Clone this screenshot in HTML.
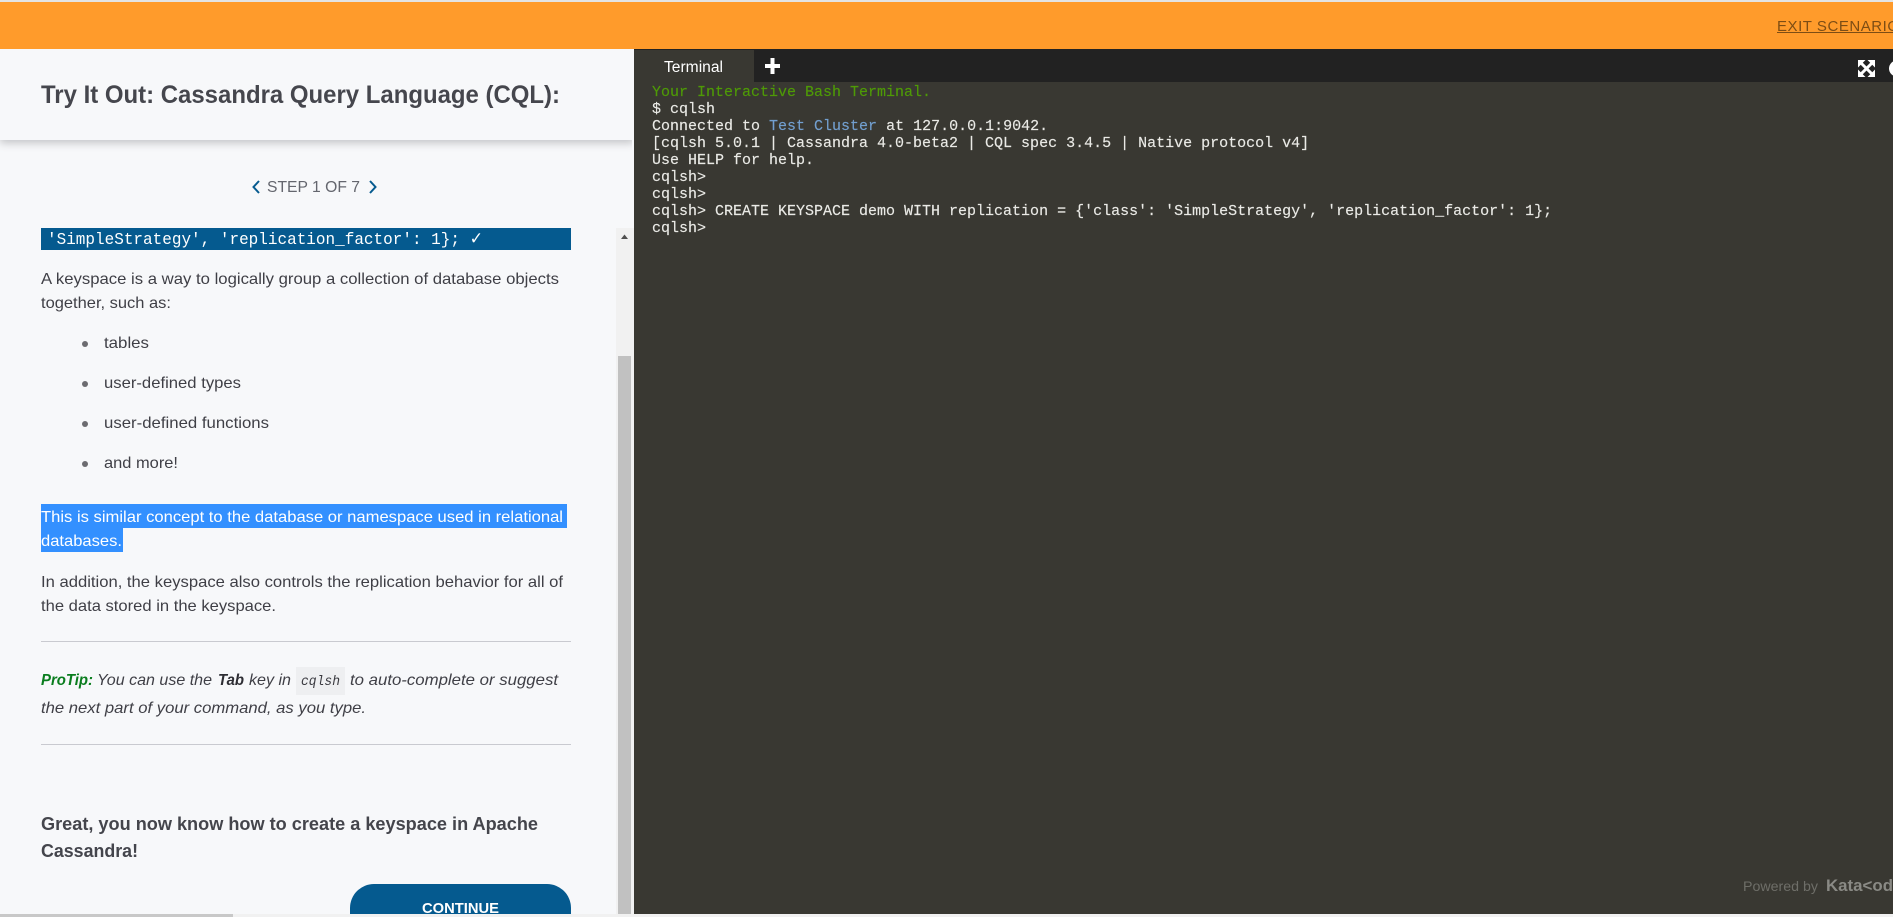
<!DOCTYPE html>
<html lang="en">
<head>
<meta charset="utf-8">
<title>Try It Out: Cassandra Query Language (CQL)</title>
<style>
html,body{margin:0;padding:0;width:1893px;height:917px;overflow:hidden;background:#f7f8fa;font-family:"Liberation Sans",sans-serif}
#w{position:relative;width:1893px;height:917px;overflow:hidden;background:#f7f8fa}
.b{position:absolute}
svg{position:absolute;left:0;top:0}
text{font-family:"Liberation Sans",sans-serif;white-space:pre}
.p{font-size:16px;fill:#3f3f46}
.t{font-family:"Liberation Mono",monospace;font-size:15px;fill:#eaeae6;stroke:#eaeae6;stroke-width:.15px}
</style>
</head>
<body>
<div id="w">
<div class="b" style="left:0;top:0;width:1893px;height:2px;background:#e4e4e4"></div>
<div class="b" style="left:0;top:2px;width:1893px;height:47px;background:#ff9b2b"></div>

<div class="b" style="left:0;top:49px;width:634px;height:91px;background:#f7f8fa;box-shadow:0 3px 8px rgba(60,60,70,.28);clip-path:inset(0 2px -20px 0)"></div>

<div class="b" style="left:41px;top:228px;width:530px;height:22px;background:#055a8f"></div>
<div class="b" style="left:41px;top:504px;width:526px;height:24px;background:#3390ff"></div>
<div class="b" style="left:41px;top:528px;width:82px;height:24px;background:#3390ff"></div>
<div class="b" style="left:41px;top:641px;width:530px;height:1px;background:#c9cad0"></div>
<div class="b" style="left:41px;top:744px;width:530px;height:1px;background:#c9cad0"></div>
<div class="b" style="left:296px;top:667px;width:49px;height:28px;background:#eeeff1"></div>
<div class="b" style="left:350px;top:884px;width:221px;height:30px;border-radius:24px 24px 0 0;background:#055a8f"></div>

<div class="b" style="left:616px;top:228px;width:18px;height:689px;background:#f1f1f1"></div>
<div class="b" style="left:618px;top:356px;width:13px;height:561px;background:#c1c1c1"></div>

<div class="b" style="left:634px;top:49px;width:1259px;height:865px;background:#393832"></div>
<div class="b" style="left:634px;top:49px;width:1259px;height:33px;background:#222222"></div>
<div class="b" style="left:634px;top:50px;width:120px;height:32px;background:#393832"></div>

<svg width="1893" height="917" viewBox="0 0 1893 917">
  <text x="1777" y="31" font-size="15" fill="#7d4d14" textLength="122" lengthAdjust="spacing">EXIT SCENARIO</text>
  <rect x="1777" y="32" width="116" height="1" fill="#7d4d14"/>

  <text x="41" y="103" font-size="25" font-weight="700" fill="#45464d" textLength="519" lengthAdjust="spacingAndGlyphs">Try It Out: Cassandra Query Language (CQL):</text>

  <path d="M259 181 L253.5 187 L259 193" fill="none" stroke="#055a8f" stroke-width="2"/>
  <path d="M370 181 L375.5 187 L370 193" fill="none" stroke="#055a8f" stroke-width="2"/>
  <text x="267" y="192" font-size="15.5" fill="#64666e" textLength="93" lengthAdjust="spacingAndGlyphs">STEP 1 OF 7</text>

  <text x="47" y="244" font-size="17" fill="#fff" textLength="436" lengthAdjust="spacingAndGlyphs" style="font-family:'Liberation Mono','DejaVu Sans',monospace">'SimpleStrategy', 'replication_factor': 1}; ✓</text>
  <path d="M624.5 234.5 L628 239 L621 239 Z" fill="#505050"/>

  <text class="p" x="41" y="284" textLength="518" lengthAdjust="spacingAndGlyphs">A keyspace is a way to logically group a collection of database objects</text>
  <text class="p" x="41" y="308" textLength="130" lengthAdjust="spacingAndGlyphs">together, such as:</text>

  <circle cx="85" cy="344" r="3" fill="#6c6c70"/>
  <circle cx="85" cy="384" r="3" fill="#6c6c70"/>
  <circle cx="85" cy="424" r="3" fill="#6c6c70"/>
  <circle cx="85" cy="464" r="3" fill="#6c6c70"/>
  <text class="p" x="104" y="348" textLength="45" lengthAdjust="spacingAndGlyphs">tables</text>
  <text class="p" x="104" y="388" textLength="137" lengthAdjust="spacingAndGlyphs">user-defined types</text>
  <text class="p" x="104" y="428" textLength="165" lengthAdjust="spacingAndGlyphs">user-defined functions</text>
  <text class="p" x="104" y="468" textLength="74" lengthAdjust="spacingAndGlyphs">and more!</text>

  <text x="41" y="522" font-size="16" fill="#fff" textLength="522" lengthAdjust="spacingAndGlyphs">This is similar concept to the database or namespace used in relational</text>
  <text x="41" y="546" font-size="16" fill="#fff" textLength="81" lengthAdjust="spacingAndGlyphs">databases.</text>

  <text class="p" x="41" y="587" textLength="522" lengthAdjust="spacingAndGlyphs">In addition, the keyspace also controls the replication behavior for all of</text>
  <text class="p" x="41" y="611" textLength="235" lengthAdjust="spacingAndGlyphs">the data stored in the keyspace.</text>

  <text x="41" y="685" font-size="16" font-weight="700" font-style="italic" fill="#0a7d1e" textLength="52" lengthAdjust="spacingAndGlyphs">ProTip:</text>
  <text class="p" x="97" y="685" font-style="italic" textLength="115" lengthAdjust="spacingAndGlyphs">You can use the</text>
  <text x="218" y="685" font-size="16" font-weight="700" font-style="italic" fill="#2e2e34" textLength="26" lengthAdjust="spacingAndGlyphs">Tab</text>
  <text class="p" x="249" y="685" font-style="italic" textLength="42" lengthAdjust="spacingAndGlyphs">key in</text>
  <text x="301" y="685" font-size="14" font-style="italic" fill="#3a3a40" textLength="39" lengthAdjust="spacingAndGlyphs" style="font-family:'Liberation Mono',monospace">cqlsh</text>
  <text class="p" x="350" y="685" font-style="italic" textLength="208" lengthAdjust="spacingAndGlyphs">to auto-complete or suggest</text>
  <text class="p" x="41" y="713" font-style="italic" textLength="325" lengthAdjust="spacingAndGlyphs">the next part of your command, as you type.</text>

  <text x="41" y="830" font-size="18" font-weight="700" fill="#44454c" textLength="497" lengthAdjust="spacingAndGlyphs">Great, you now know how to create a keyspace in Apache</text>
  <text x="41" y="857" font-size="18" font-weight="700" fill="#44454c" textLength="97" lengthAdjust="spacingAndGlyphs">Cassandra!</text>

  <text x="422" y="913" font-size="15" font-weight="700" fill="#fff" textLength="77" lengthAdjust="spacingAndGlyphs">CONTINUE</text>
  <rect x="0" y="914" width="1893" height="3" fill="#f1f1f1"/>
  <rect x="0" y="914" width="233" height="3" fill="#c8c8c8"/>

  <text x="664" y="72" font-size="15.5" fill="#ffffff" textLength="59" lengthAdjust="spacingAndGlyphs">Terminal</text>
  <path d="M772.5 58V74M765 66H780" stroke="#fff" stroke-width="4" fill="none"/>

  <text class="t" x="652" y="96" style="fill:#4e9a06;stroke:#4e9a06">Your Interactive Bash Terminal.</text>
  <text class="t" x="652" y="113">$ cqlsh</text>
  <text class="t" x="652" y="130">Connected to <tspan style="fill:#729fcf;stroke:#729fcf">Test Cluster</tspan> at 127.0.0.1:9042.</text>
  <text class="t" x="652" y="147">[cqlsh 5.0.1 | Cassandra 4.0-beta2 | CQL spec 3.4.5 | Native protocol v4]</text>
  <text class="t" x="652" y="164">Use HELP for help.</text>
  <text class="t" x="652" y="181">cqlsh&gt;</text>
  <text class="t" x="652" y="198">cqlsh&gt;</text>
  <text class="t" x="652" y="215">cqlsh&gt; CREATE KEYSPACE demo WITH replication = {'class': 'SimpleStrategy', 'replication_factor': 1};</text>
  <text class="t" x="652" y="232">cqlsh&gt;</text>

  <g fill="#fff">
    <path d="M1858 60h7.5l-7.5 7.5zM1875 60h-7.5l7.5 7.5zM1858 77h7.5l-7.5-7.5zM1875 77h-7.5l7.5-7.5z"/>
    <path d="M1861 63L1872 74M1872 63L1861 74" stroke="#fff" stroke-width="3" fill="none"/>
    <circle cx="1897" cy="68.5" r="8"/>
  </g>

  <text x="1743" y="891" font-size="14" fill="#6e6e68" textLength="75" lengthAdjust="spacingAndGlyphs">Powered by</text>
  <text x="1826" y="891" font-size="17" font-weight="700" fill="#8a8a85" textLength="67" lengthAdjust="spacingAndGlyphs">Kata&lt;od</text>
</svg>
</div>
</body>
</html>
